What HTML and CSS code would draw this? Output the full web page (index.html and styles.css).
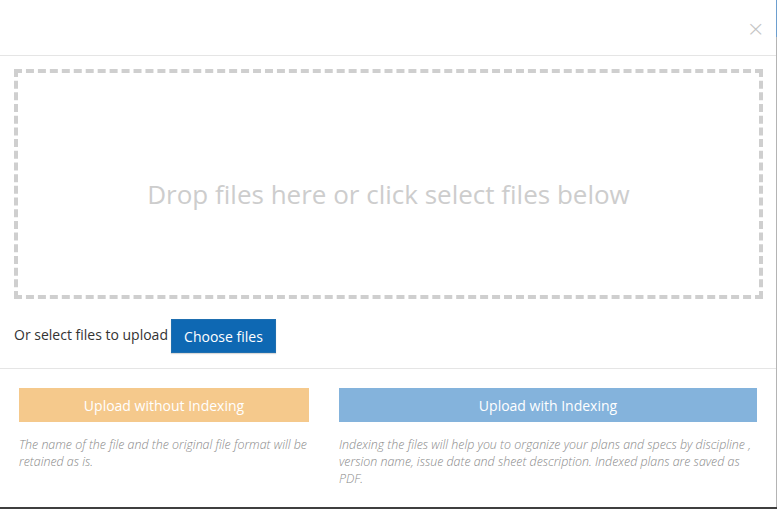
FILE: index.html
```html
<!DOCTYPE html>
<html>
<head>
<meta charset="utf-8">
<link rel="stylesheet" href="styles.css">
</head>
<body>
<div class="modal">
  <div class="modal-header">
    <span class="close">&times;</span>
  </div>
  <div class="modal-body">
    <div class="dropzone">
      <span class="drop-text">Drop files here or click select files below</span>
    </div>
    <div class="select-row">
      <span class="select-label">Or select files to upload</span>
      <button class="btn-choose">Choose files</button>
    </div>
  </div>
  <div class="modal-footer">
    <div class="option">
      <button class="btn-upload btn-orange">Upload without Indexing</button>
      <p class="desc">The name of the file and the original file format will be retained as is.</p>
    </div>
    <div class="option">
      <button class="btn-upload btn-blue">Upload with Indexing</button>
      <p class="desc">Indexing the files will help you to organize your plans and specs by discipline , version name, issue date and sheet description. Indexed plans are saved as PDF.</p>
    </div>
  </div>
</div>
</body>
</html>
```

FILE: styles.css
```css
html, body {
  margin: 0;
  padding: 0;
  background: #3f3f3f;
}
body {
  font-family: "Open Sans", "Liberation Sans", sans-serif;
  width: 777px;
  height: 509px;
  overflow: hidden;
}
.modal {
  width: 776px;
  height: 507px;
  background: #fff;
  border-right: 1px solid #a8a8a8;
  border-image: linear-gradient(to bottom, #6d9fcf 0, #6d9fcf 38px, #b4b4b4 38px) 1;
  border-top: 0;
  border-left: 0;
  border-bottom: 0;
  box-sizing: content-box;
}
.modal-header {
  height: 55px;
  border-bottom: 1px solid #e5e5e5;
  display: flex;
  justify-content: flex-end;
  align-items: center;
  padding-right: 11px;
}
.close {
  color: #c4c4c4;
  font-size: 22px;
  line-height: 1;
  font-family: "DejaVu Sans", sans-serif;
  font-weight: 300;
  margin-top: 3px;
}
.modal-body {
  padding: 13px 13px 1px 14px;
  border-bottom: 1px solid #e5e5e5;
}
.dropzone {
  height: 222px;
  border: 4px dashed #cfcfcf;
  display: flex;
  align-items: center;
  justify-content: center;
}
.drop-text {
  color: #cdcdcd;
  font-size: 26px;
  margin-top: 20px;
}
.select-row {
  display: flex;
  align-items: center;
  margin-top: 20px;
  padding-bottom: 14px;
}
.select-label {
  font-size: 14px;
  color: #333;
  margin-top: -4px;
}
.btn-choose {
  margin-left: 3px;
  height: 34px;
  width: 105px;
  background: #0e68b3;
  color: #fff;
  border: 1px solid #1f6fb0;
  box-shadow: 0 1px 1px rgba(0,0,0,0.15);
  font-family: "Open Sans", "Liberation Sans", sans-serif;
  font-size: 14px;
  padding: 0;
}
.modal-footer {
  display: grid;
  grid-template-columns: 290px 418px;
  column-gap: 30px;
  padding: 19px 0 0 19px;
}
.btn-upload {
  display: block;
  width: 100%;
  height: 34px;
  border: 0;
  color: #fff;
  font-family: "Open Sans", "Liberation Sans", sans-serif;
  font-size: 14px;
  font-weight: 500;
  padding: 0;
}
.btn-orange {
  background: #f5c98c;
}
.btn-blue {
  background: #84b3dc;
}
.desc {
  margin: 14px 0 0 0;
  font-size: 12.4px;
  line-height: 17px;
  font-style: italic;
  font-weight: 300;
  color: #8a8a8a;
}
```
